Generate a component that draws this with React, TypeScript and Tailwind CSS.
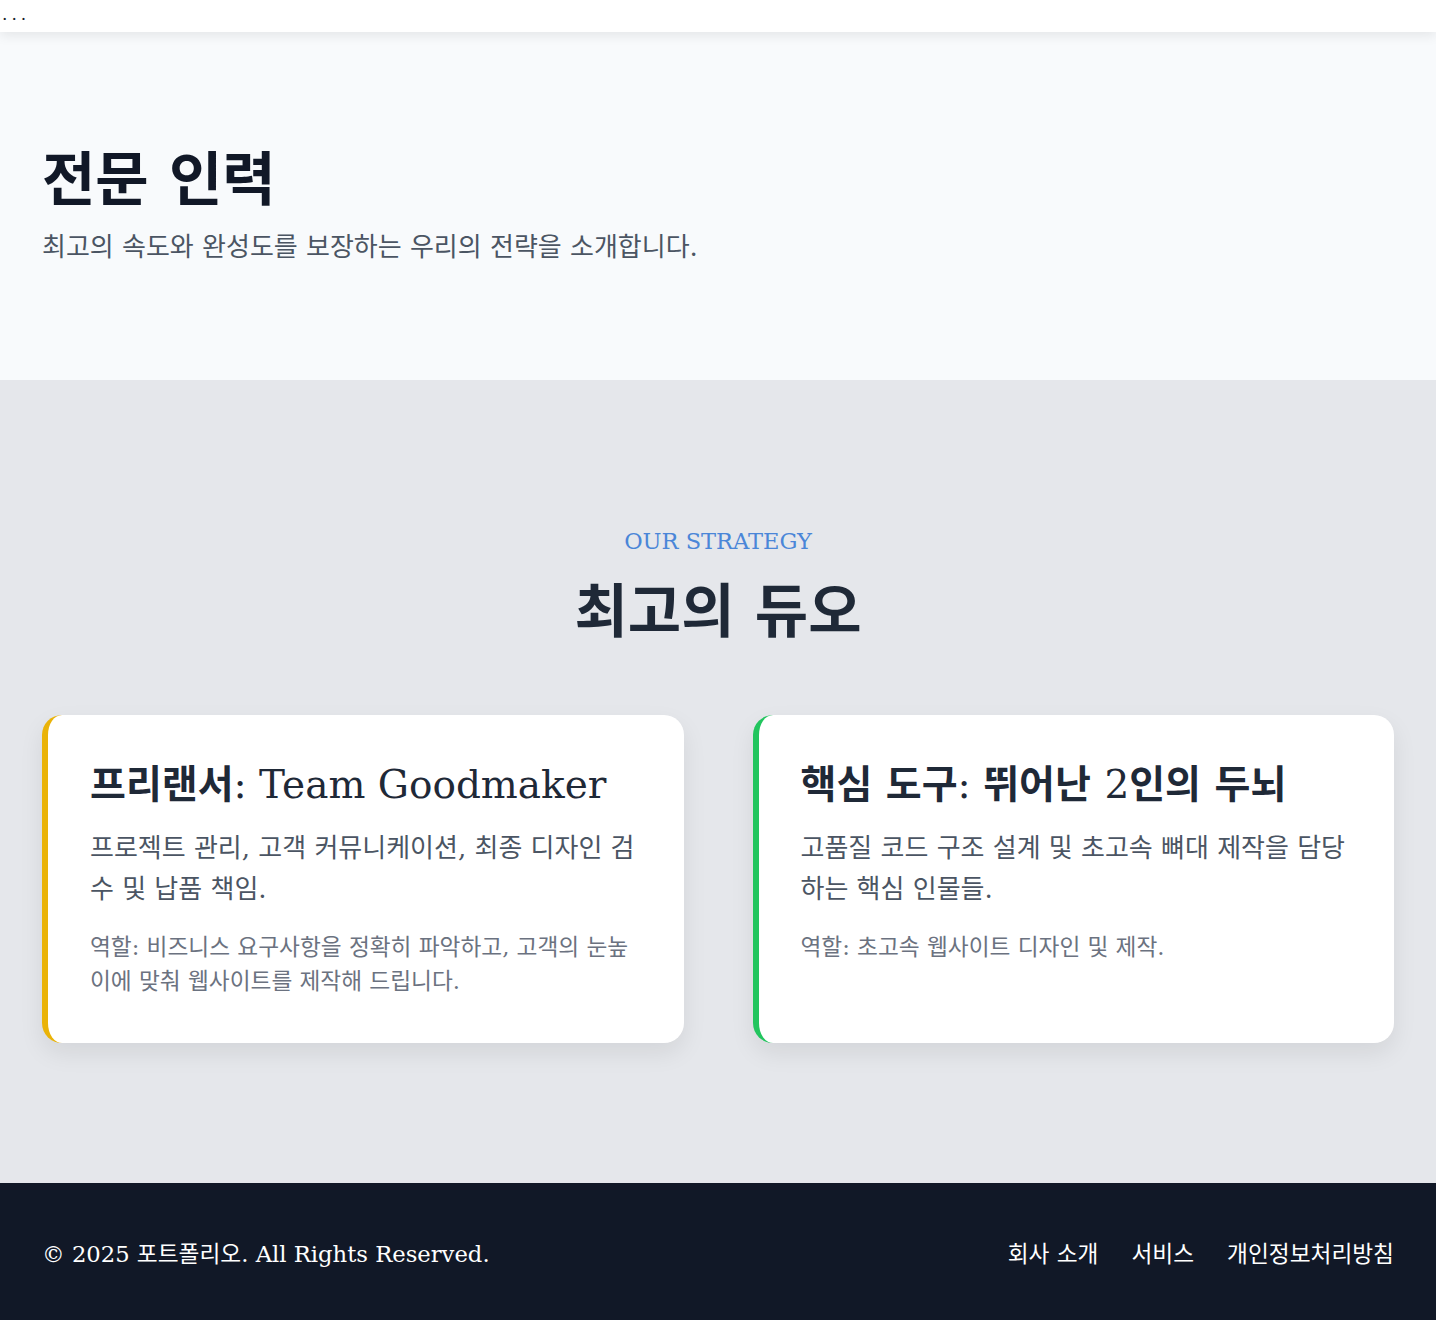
import React from "react";

type Member = {
    title: React.ReactNode;
    desc: string;
    role: string;
    border: string;
};

const members: Member[] = [
    {
        title: (
            <>
                <span className="font-bold">프리랜서</span>
                <span>: Team Goodmaker</span>
            </>
        ),
        desc: "프로젝트 관리, 고객 커뮤니케이션, 최종 디자인 검수 및 납품 책임.",
        role: "역할: 비즈니스 요구사항을 정확히 파악하고, 고객의 눈높이에 맞춰 웹사이트를 제작해 드립니다.",
        border: "border-[#eab308]",
    },
    {
        title: (
            <>
                <span className="font-bold">핵심 도구</span>
                <span>: </span>
                <span className="font-bold">뛰어난 </span>
                <span>2</span>
                <span className="font-bold">인의 두뇌</span>
            </>
        ),
        desc: "고품질 코드 구조 설계 및 초고속 뼈대 제작을 담당하는 핵심 인물들.",
        role: "역할: 초고속 웹사이트 디자인 및 제작.",
        border: "border-[#22c55e]",
    },
];

const MemberCard = ({ m }: { m: Member }) => {
    return (
        <div
            className={`rounded-[20px] border-l-[6px] ${m.border} bg-white px-[42px] pt-[44px] pb-[45px] shadow-[0_10px_24px_rgba(0,0,0,0.08)]`}
        >
            <h3 className="text-[39px] font-normal leading-[1.3] text-[#1f2937]">{m.title}</h3>
            <p className="mt-[17px] text-[26px] leading-[41px] text-[#4b5563]">{m.desc}</p>
            <p className="mt-[20px] text-[22.7px] leading-[34px] text-[#6b7280]">{m.role}</p>
        </div>
    );
};

export default function App() {
    return (
        <div className="min-h-screen bg-white font-['DejaVu_Serif','Noto_Sans_CJK_KR',serif] text-[#1f2937]">
            {/* Nav */}
            <header className="relative z-10 h-[32px] bg-white shadow-[0_4px_12px_rgba(0,0,0,0.08)]">
                <div className="pl-[2px] pt-[4px] text-[17px] leading-[20px] tracking-[4px] text-[#111827]">...</div>
            </header>

            {/* Hero */}
            <section className="bg-[#f8fafc] px-[42px] pt-[114px] pb-[113px]">
                <h1 className="text-[58px] font-bold leading-[1.2] text-[#111827]">전문 인력</h1>
                <p className="mt-[12px] text-[26px] leading-[39px] text-[#4b5563]">
                    최고의 속도와 완성도를 보장하는 우리의 전략을 소개합니다.
                </p>
            </section>

            {/* Strategy */}
            <section className="bg-[#e5e7eb] px-[42px] pt-[143px] pb-[140px]">
                <p className="text-center text-[22.5px] leading-[36px] text-[#4a86d8]">OUR STRATEGY</p>
                <h2 className="mt-[19px] text-center text-[58px] font-bold leading-[1.2] text-[#1f2937]">최고의 듀오</h2>
                <div className="mt-[68px] grid grid-cols-2 gap-[69px]">
                    {members.map((m) => (
                        <MemberCard key={m.desc} m={m} />
                    ))}
                </div>
            </section>

            {/* Footer */}
            <footer className="flex items-center justify-between bg-[#111827] px-[42px] py-[56px] text-white">
                <p className="text-[22.7px] leading-[30px]">© 2025 포트폴리오. All Rights Reserved.</p>
                <nav className="flex gap-[33px] text-[22.7px] leading-[30px]">
                    <a>회사 소개</a>
                    <a>서비스</a>
                    <a>개인정보처리방침</a>
                </nav>
            </footer>
        </div>
    );
}
